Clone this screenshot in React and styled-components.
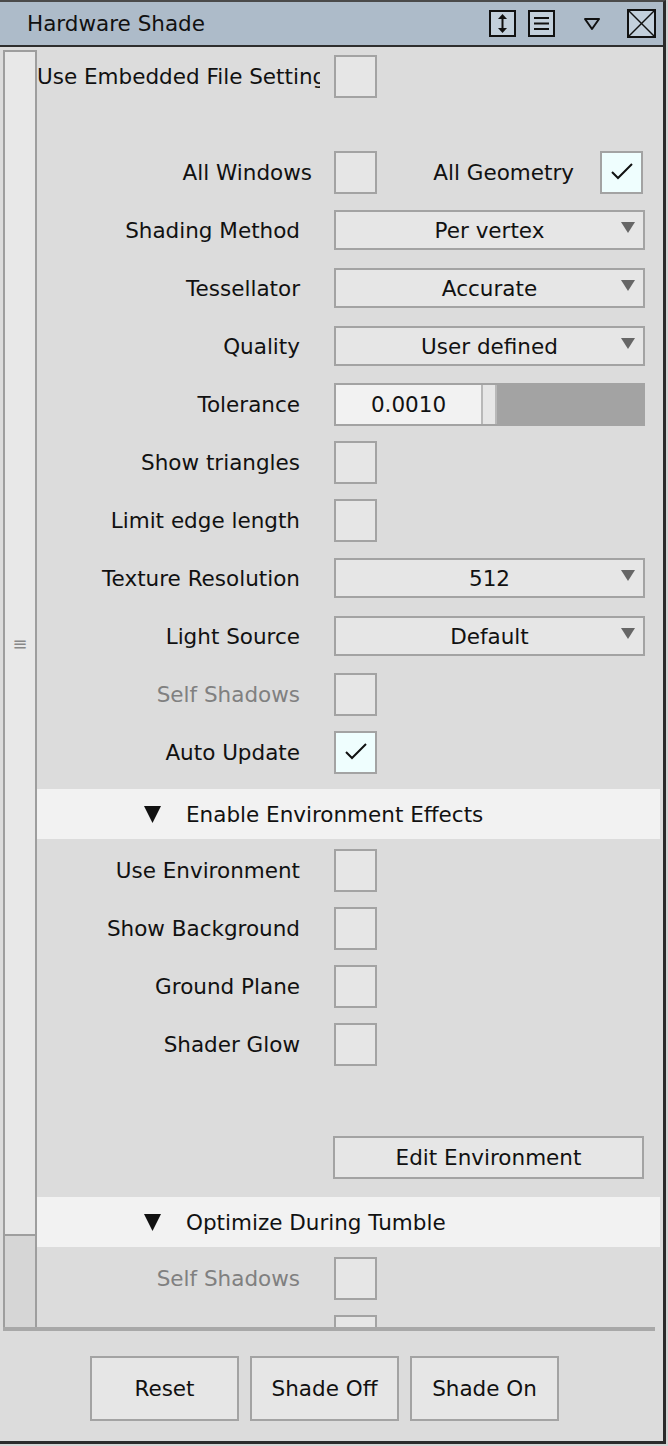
import React from "react";
import styled, { createGlobalStyle } from "styled-components";

const GlobalStyle = createGlobalStyle`
  html, body {
    margin: 0;
    padding: 0;
    background: #d4d4d4;
  }
  body {
    font-family: "DejaVu Sans", "Liberation Sans", sans-serif;
    font-size: 21.5px;
    color: #111;
  }
`;

const Window = styled.div`
  width: 666px;
  height: 1444px;
  box-sizing: border-box;
  background: #dcdcdc;
  border-top: 2px solid #4a4a4a;
  border-right: 3px solid #2b2b2b;
  border-bottom: 3px solid #2b2b2b;
  display: flex;
  flex-direction: column;
  overflow: hidden;
`;

const TitleBar = styled.div`
  height: 43px;
  flex-shrink: 0;
  background: #adbbc9;
  border-bottom: 2px solid #2e2e2e;
  display: flex;
  align-items: center;
  justify-content: space-between;
  padding: 0 7px 0 27px;
`;

const TitleText = styled.span`
  font-size: 21.5px;
  color: #111;
`;

const TitleIcons = styled.div`
  display: flex;
  align-items: center;
  gap: 12px;
`;

const Body = styled.div`
  height: 1280px;
  flex-shrink: 0;
  display: flex;
`;

const Scroll = styled.div`
  width: 34px;
  margin: 3px 0 0 3px;
  box-sizing: border-box;
  border: 2px solid #9e9e9e;
  border-bottom: none;
  background: #d6d6d6;
  display: flex;
  flex-direction: column;
`;

const Thumb = styled.div`
  height: 1182px;
  background: #e8e8e8;
  border-bottom: 2px solid #9e9e9e;
  display: flex;
  align-items: center;
  justify-content: center;
  color: #888;
  font-size: 18px;
`;

const Content = styled.div`
  flex: 1;
  margin-right: 3px;
  overflow: hidden;
  display: flex;
  flex-direction: column;
`;

const Row = styled.div`
  height: 58px;
  flex-shrink: 0;
  display: flex;
  align-items: center;
  margin-bottom: ${(p) => p.$after || 0}px;
`;

const Label = styled.div`
  width: ${(p) => p.$w || 263}px;
  flex-shrink: 0;
  text-align: right;
  white-space: nowrap;
  color: ${(p) => (p.$dim ? "#808080" : "#111")};
  margin-right: ${(p) => p.$gap ?? 34}px;
`;

const ClipLabel = styled.div`
  width: 283px;
  flex-shrink: 0;
  white-space: nowrap;
  overflow: hidden;
  margin-right: 14px;
`;

const SideLabel = styled.div`
  flex: 1;
  text-align: right;
  white-space: nowrap;
  padding-right: 26px;
`;

const Box = styled.div`
  width: 43px;
  height: 43px;
  box-sizing: border-box;
  flex-shrink: 0;
  border: 2px solid #a3a3a3;
  background: ${(p) => (p.$on ? "#effefe" : "#e6e6e6")};
  margin-right: ${(p) => p.$right || 0}px;
  display: flex;
  align-items: center;
  justify-content: center;
`;

const Drop = styled.div`
  width: 311px;
  height: 40px;
  box-sizing: border-box;
  border: 2px solid #a3a3a3;
  background: #e6e6e6;
  display: grid;
  grid-template-columns: 30px 1fr 30px;
  align-items: center;
`;

const DropText = styled.span`
  text-align: center;
  white-space: nowrap;
`;

const ArrowSlot = styled.span`
  display: flex;
  justify-content: center;
  align-self: start;
  padding-top: 10px;
`;

const Slider = styled.div`
  width: 311px;
  height: 43px;
  box-sizing: border-box;
  border: 2px solid #a3a3a3;
  display: flex;
  background: #a3a3a3;
`;

const Field = styled.div`
  width: 145px;
  background: #f2f2f2;
  display: flex;
  align-items: center;
  justify-content: center;
`;

const Knob = styled.div`
  width: 12px;
  background: #e6e6e6;
  border-left: 2px solid #b8b8b8;
  border-right: 2px solid #b8b8b8;
`;

const Section = styled.div`
  height: 50px;
  flex-shrink: 0;
  background: #f2f2f2;
  display: flex;
  align-items: center;
  padding-left: 107px;
  gap: 25px;
  margin: ${(p) => p.$top}px 0 2px;
`;

const ButtonRow = styled.div`
  display: flex;
  padding: 63px 0 0 296px;
  flex-shrink: 0;
`;

const WideButton = styled.button`
  width: 311px;
  height: 43px;
  box-sizing: border-box;
  border: 2px solid #a3a3a3;
  background: #e6e6e6;
  font: inherit;
  color: #111;
  padding: 0;
`;

const Separator = styled.div`
  height: 4px;
  flex-shrink: 0;
  margin: 0 8px 0 3px;
  border-top: 2px solid #a8a8a8;
  border-bottom: 2px solid #a8a8a8;
  box-sizing: border-box;
  background: #c8c8c8;
`;

const Footer = styled.div`
  flex: 1;
  display: flex;
  gap: 11px;
  padding: 25px 0 0 90px;
`;

const FootButton = styled.button`
  width: 149px;
  height: 65px;
  box-sizing: border-box;
  border: 2px solid #a3a3a3;
  background: #e6e6e6;
  font: inherit;
  color: #111;
  padding: 0;
`;

const Check = () => (
  <svg width="30" height="30" viewBox="0 0 30 30">
    <polyline points="5,15 11,21 25,7" fill="none" stroke="#111" strokeWidth="2" />
  </svg>
);

const Arrow = () => (
  <svg width="14" height="11" viewBox="0 0 14 11">
    <polygon points="0,0 14,0 7,11" fill="#666" />
  </svg>
);

const Caret = () => (
  <svg width="17" height="17" viewBox="0 0 17 17">
    <polygon points="0,0 17,0 8.5,17" fill="#111" />
  </svg>
);

const ResizeIcon = () => (
  <svg width="27" height="27" viewBox="0 0 27 27">
    <rect x="1" y="1" width="25" height="25" fill="#c3d0dc" stroke="#111" strokeWidth="2" />
    <line x1="13.5" y1="8" x2="13.5" y2="19" stroke="#111" strokeWidth="2" />
    <polygon points="9,9 18,9 13.5,4" fill="#111" />
    <polygon points="9,18 18,18 13.5,23" fill="#111" />
  </svg>
);

const MenuIcon = () => (
  <svg width="27" height="27" viewBox="0 0 27 27">
    <rect x="1" y="1" width="25" height="25" fill="#c3d0dc" stroke="#111" strokeWidth="2" />
    <line x1="6" y1="8" x2="21" y2="8" stroke="#111" strokeWidth="2" />
    <line x1="6" y1="13.5" x2="21" y2="13.5" stroke="#111" strokeWidth="2" />
    <line x1="6" y1="19" x2="21" y2="19" stroke="#111" strokeWidth="2" />
  </svg>
);

const CollapseIcon = () => (
  <svg width="18" height="14" viewBox="0 0 18 14">
    <polygon points="2,2 16,2 9,12" fill="none" stroke="#111" strokeWidth="2" strokeLinejoin="round" />
  </svg>
);

const CloseIcon = () => (
  <svg width="29" height="29" viewBox="0 0 29 29">
    <rect x="1" y="1" width="27" height="27" fill="#c3d0dc" stroke="#111" strokeWidth="2" />
    <line x1="2" y1="2" x2="27" y2="27" stroke="#111" strokeWidth="1.5" />
    <line x1="27" y1="2" x2="2" y2="27" stroke="#111" strokeWidth="1.5" />
  </svg>
);

const CheckRow = ({ label, on, dim }) => (
  <Row>
    <Label $dim={dim}>{label}</Label>
    <Box $on={on}>{on && <Check />}</Box>
  </Row>
);

const DropRow = ({ label, value }) => (
  <Row>
    <Label>{label}</Label>
    <Drop>
      <span />
      <DropText>{value}</DropText>
      <ArrowSlot>
        <Arrow />
      </ArrowSlot>
    </Drop>
  </Row>
);

export default function App() {
  return (
    <>
      <GlobalStyle />
      <Window>
        <TitleBar>
          <TitleText>Hardware Shade</TitleText>
          <TitleIcons>
            <ResizeIcon />
            <MenuIcon />
            <span style={{ width: 4 }} />
            <CollapseIcon />
            <span style={{ width: 2 }} />
            <CloseIcon />
          </TitleIcons>
        </TitleBar>
        <Body>
          <Scroll>
            <Thumb>≡</Thumb>
          </Scroll>
          <Content>
            <Row $after={38}>
              <ClipLabel>Use Embedded File Settings</ClipLabel>
              <Box />
            </Row>
            <Row>
              <Label $w={275} $gap={22}>All Windows</Label>
              <Box />
              <SideLabel>All Geometry</SideLabel>
              <Box $on $right={17}>
                <Check />
              </Box>
            </Row>
            <DropRow label="Shading Method" value="Per vertex" />
            <DropRow label="Tessellator" value="Accurate" />
            <DropRow label="Quality" value="User defined" />
            <Row>
              <Label>Tolerance</Label>
              <Slider>
                <Field>0.0010</Field>
                <Knob />
              </Slider>
            </Row>
            <CheckRow label="Show triangles" />
            <CheckRow label="Limit edge length" />
            <DropRow label="Texture Resolution" value="512" />
            <DropRow label="Light Source" value="Default" />
            <CheckRow label="Self Shadows" dim />
            <CheckRow label="Auto Update" on />
            <Section $top={8}>
              <Caret />
              <span>Enable Environment Effects</span>
            </Section>
            <CheckRow label="Use Environment" />
            <CheckRow label="Show Background" />
            <CheckRow label="Ground Plane" />
            <CheckRow label="Shader Glow" />
            <ButtonRow>
              <WideButton>Edit Environment</WideButton>
            </ButtonRow>
            <Section $top={18}>
              <Caret />
              <span>Optimize During Tumble</span>
            </Section>
            <CheckRow label="Self Shadows" dim />
            <CheckRow label="" />
          </Content>
        </Body>
        <Separator />
        <Footer>
          <FootButton>Reset</FootButton>
          <FootButton>Shade Off</FootButton>
          <FootButton>Shade On</FootButton>
        </Footer>
      </Window>
    </>
  );
}
